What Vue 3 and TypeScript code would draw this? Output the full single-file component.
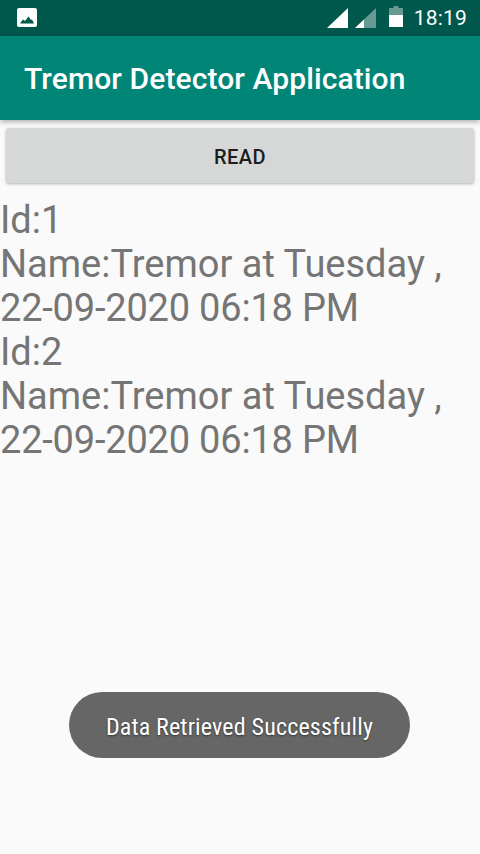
<script setup lang="ts">
interface Line { text: string; isDate: boolean }
const lines: Line[] = [
  { text: 'Id:1', isDate: false },
  { text: 'Name:Tremor at Tuesday ,', isDate: false },
  { text: '22-09-2020 06:18 PM', isDate: true },
  { text: 'Id:2', isDate: false },
  { text: 'Name:Tremor at Tuesday ,', isDate: false },
  { text: '22-09-2020 06:18 PM', isDate: true },
]
</script>

<template>
  <div class="screen">
    <div class="status">
      <svg class="pic" width="20" height="19" viewBox="0 0 20 19">
        <rect x="0" y="0" width="20" height="19" rx="2" fill="#fff" />
        <path d="M3 15.5 L6 11.5 L8 13 L11.5 8.5 L14 12 L15 11.5 L17 15.5 Z" fill="#00574b" />
      </svg>
      <div class="status-right">
        <svg class="sig" width="22" height="22" viewBox="0 0 22 22">
          <path d="M0 21 L21 1 V21 Z" fill="#fff" />
        </svg>
        <svg class="sig sig2" width="22" height="22" viewBox="0 0 22 22">
          <path d="M0 21 L21 1 V21 Z" fill="#fff" fill-opacity="0.4" />
          <path d="M0 21 L9 12.4 V21 Z" fill="#fff" />
        </svg>
        <svg class="bat" width="14" height="21" viewBox="0 0 14 21">
          <path d="M4.5 0 H9.5 V2 H14 V21 H0 V2 H4.5 Z" fill="#fff" fill-opacity="0.4" />
          <path d="M0 9 H14 V21 H0 Z" fill="#fff" />
        </svg>
        <span class="time">18:19</span>
      </div>
    </div>
    <header class="appbar">Tremor Detector Application</header>
    <main class="body">
      <div class="btn-wrap">
        <button class="read" type="button">READ</button>
      </div>
      <div class="list">
        <div v-for="(l, i) in lines" :key="i" class="line" :class="{ date: l.isDate }">{{ l.text }}</div>
      </div>
    </main>
    <div class="toast">Data Retrieved Successfully</div>
  </div>
</template>

<style scoped>
.screen {
  position: relative;
  width: 480px;
  height: 854px;
  overflow: hidden;
  background: #fafafa;
  font-family: Roboto, "Noto Sans", sans-serif;
  display: flex;
  flex-direction: column;
}
.status {
  height: 36px;
  flex: none;
  background: #00574b;
  display: flex;
  align-items: center;
  justify-content: space-between;
  padding: 0 13px 0 17px;
  box-sizing: border-box;
}
.pic { display: block; margin-top: -1px; }
.status-right {
  display: flex;
  align-items: center;
  height: 100%;
}
.sig { display: block; margin-top: -1px; }
.sig2 { margin-left: 6px; }
.bat { display: block; margin-left: 12px; margin-top: -3px; }
.time {
  color: #fff;
  font-size: 21px;
  margin-left: 11px;
  letter-spacing: 0.2px;
  margin-top: -1px;
}
.appbar {
  height: 84px;
  flex: none;
  background: #008577;
  color: #fff;
  font-size: 30px;
  font-weight: 500;
  letter-spacing: 0.1px;
  display: flex;
  align-items: center;
  padding-left: 24px;
  padding-top: 2px;
  box-sizing: border-box;
  box-shadow: 0 2px 5px rgba(0, 0, 0, 0.3);
  position: relative;
  z-index: 1;
  line-height: 1;
}
.body { flex: 1; display: flex; flex-direction: column; }
.btn-wrap { padding: 8px 6px 0; }
.read {
  display: block;
  width: 100%;
  height: 55px;
  border: none;
  border-radius: 3px;
  background: #d6d7d7;
  color: #1c1c1c;
  font-family: inherit;
  font-size: 20px;
  font-weight: 500;
  letter-spacing: 0.5px;
  padding-top: 3px;
  box-shadow: 0 1px 3px rgba(0, 0, 0, 0.3);
}
.list { margin-top: 15px; }
.line {
  font-size: 38px;
  line-height: 44px;
  height: 44px;
  color: #757575;
  white-space: nowrap;
}
.date { letter-spacing: -0.2px; }
.toast {
  position: absolute;
  left: 69px;
  top: 692px;
  width: 341px;
  height: 66px;
  border-radius: 33px;
  background: #666;
  color: #fff;
  font-size: 24px;
  letter-spacing: 0.17px;
  padding-top: 3px;
  box-sizing: border-box;
  display: flex;
  align-items: center;
  justify-content: center;
  font-stretch: condensed;
  text-shadow: 0 1px 2px rgba(0, 0, 0, 0.5);
}
</style>
